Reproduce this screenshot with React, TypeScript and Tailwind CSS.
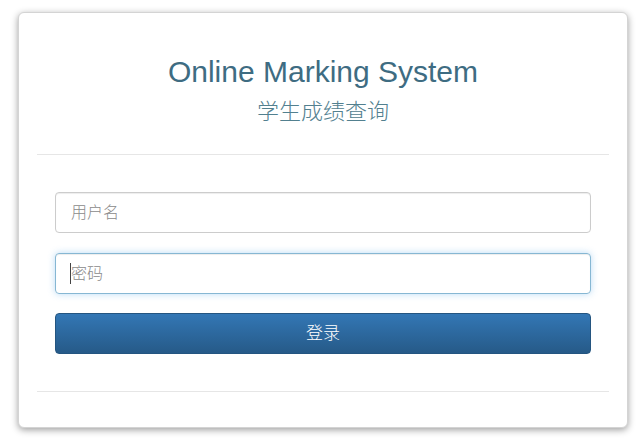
export default function App() {
  const font = {
    fontFamily: '"Liberation Sans", "Noto Sans CJK SC", Arial, sans-serif',
  };

  return (
    <div className="min-h-screen bg-white pt-[12px] pl-[18px]" style={font}>
      <div className="w-[610px] h-[416px] rounded-[6px] border border-[#d4d4d4] bg-white shadow-[0_2px_7px_rgba(0,0,0,0.38)] flex flex-col">
        {/* Header */}
        <div className="mx-[18px] pt-[43px] pb-[27px] border-b border-[#e6e6e6] text-center">
          <h1 className="text-[30px] leading-[32px] text-[#3e6c82]">
            Online Marking System
          </h1>
          <p className="mt-[9px] text-[22px] leading-[30px] font-light text-[#52808f]">
            学生成绩查询
          </p>
        </div>

        {/* Form */}
        <form className="px-[36px] py-[37px] flex flex-col gap-[20px]">
          <input
            type="text"
            placeholder="用户名"
            className="h-[41px] w-full rounded-[4px] border border-[#cccccc] px-[15px] text-[16px] font-light text-[#555] placeholder:text-[#8a8a8a] outline-none shadow-[inset_0_1px_1px_rgba(0,0,0,0.075)]"
          />
          <div className="relative">
            <input
              type="password"
              placeholder="密码"
              className="h-[41px] w-full rounded-[4px] border border-[#86b7d3] px-[15px] text-[16px] font-light text-[#555] placeholder:text-[#8a8a8a] outline-none shadow-[inset_0_1px_1px_rgba(0,0,0,0.075),0_0_7px_rgba(102,175,233,0.45)]"
            />
            <span className="absolute left-[15px] top-[10px] h-[21px] w-px bg-[#444]" />
          </div>
          <button
            type="button"
            className="-mt-[1px] h-[41px] w-full rounded-[4px] border border-[#245580] bg-gradient-to-b from-[#3377b5] to-[#265a88] text-[17px] font-light text-white"
          >
            登录
          </button>
        </form>

        {/* Footer */}
        <div className="mx-[18px] border-t border-[#e6e6e6]" />
      </div>
    </div>
  );
}
